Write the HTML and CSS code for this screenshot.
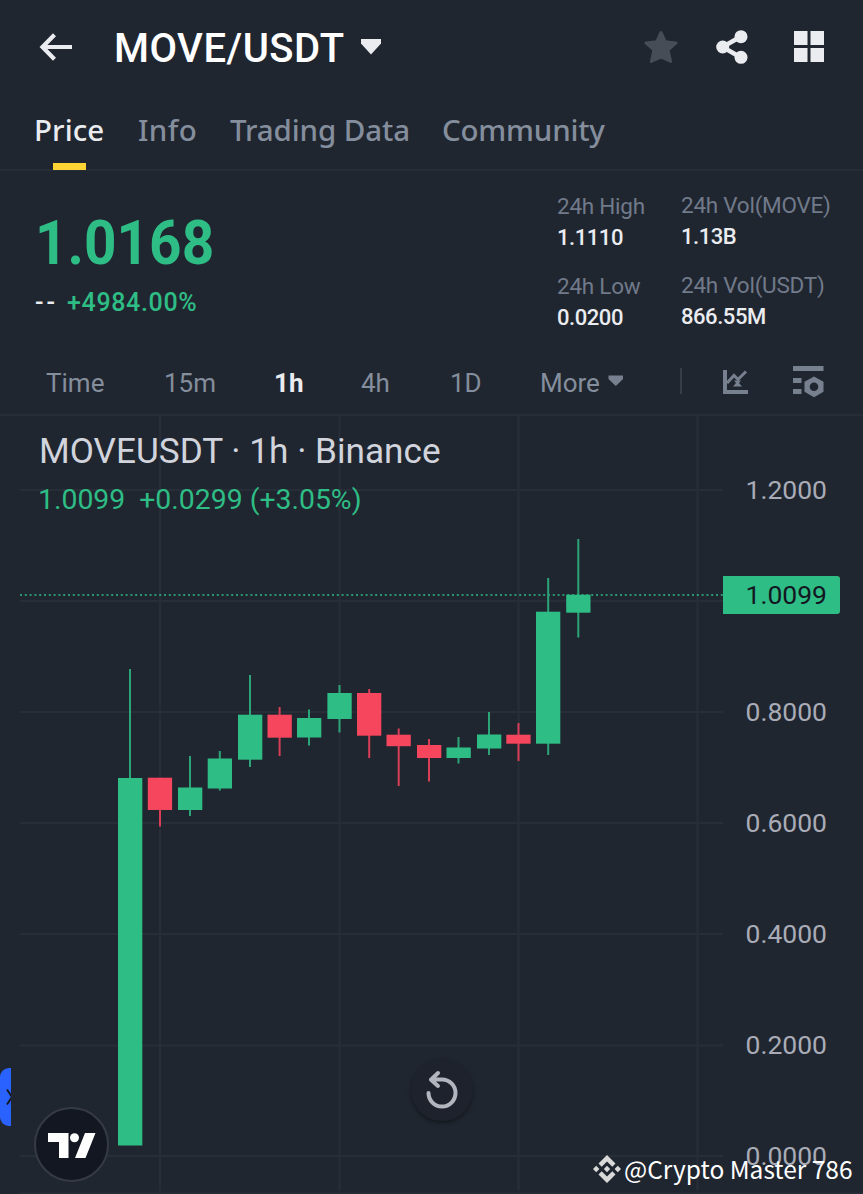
FILE: index.html
```html
<!DOCTYPE html>
<html lang="en">
<head>
  <meta charset="UTF-8" />
  <title>MOVE/USDT</title>
  <meta name="viewport" content="width=device-width, initial-scale=1.0" />
  <link rel="stylesheet" href="styles.css">
</head>
<body>
  <div class="app">
    <header class="topbar">
      <svg class="back" width="34" height="28" viewBox="0 0 34 28" fill="none" stroke="#eaecef" stroke-width="4.2">
        <path d="M33 14H4M15.500 1.800L3.500 14l12 12.200" />
      </svg>
      <h1>MOVE/USDT</h1>
      <svg class="pair-arrow" width="22" height="18" viewBox="0 0 22 18" fill="#eaecef">
        <path d="M1 1h20v4.500L11 16.500 1 5.500z" />
      </svg>
      <div class="actions">
        <svg width="34" height="34" viewBox="0 0 34 34" fill="#474d57" stroke="#474d57" stroke-width="3" stroke-linejoin="round">
          <path d="M17 2.500l4.300 9.300 10.700 1.200-7.900 7 2.500 11.500L17 27l-9.600 4.500L9.900 20 2 13l10.700-1.200z" />
        </svg>
        <svg width="32" height="34" viewBox="0 0 32 34" fill="#eaecef">
          <path d="M6.500 17L25 6.500M6.500 17L25 27.500" stroke="#eaecef" stroke-width="4.500" />
          <circle cx="6.700" cy="17" r="6.500" /><circle cx="25" cy="6.700" r="6.500" /><circle cx="25" cy="27.300" r="6.500" />
        </svg>
        <svg width="30" height="31" viewBox="0 0 30 31" fill="#eaecef">
          <path d="M0 0h13.500v14H0zM16.500 0H30v14H16.500zM0 17h13.500v14H0zM16.500 17H30v14H16.500z" />
        </svg>
      </div>
    </header>

    <nav class="tabs">
      <a class="tab active">Price</a>
      <a class="tab tab-info">Info</a>
      <a class="tab tab-data">Trading Data</a>
      <a class="tab tab-community">Community</a>
    </nav>

    <section class="ticker">
      <div class="last">
        <div class="price">1.0168</div>
        <div class="change"><span class="dash">--</span><span class="pct">+4984.00%</span></div>
      </div>
      <div class="stats">
        <dl class="stats-price">
          <dt>24h High</dt><dd>1.1110</dd>
          <dt>24h Low</dt><dd>0.0200</dd>
        </dl>
        <dl class="stats-vol">
          <dt>24h Vol(MOVE)</dt><dd>1.13B</dd>
          <dt>24h Vol(USDT)</dt><dd>866.55M</dd>
        </dl>
      </div>
    </section>

    <div class="intervals">
      <span class="iv-time">Time</span>
      <span class="iv-15m">15m</span>
      <span class="iv-1h active">1h</span>
      <span class="iv-4h">4h</span>
      <span class="iv-1d">1D</span>
      <span class="iv-more">More
        <svg width="16" height="12" viewBox="0 0 16 12" fill="#76808f"><path d="M.500.500h14.500v3.500L7.800 11 .500 4z" /></svg>
      </span>
      <i class="divider"></i>
      <svg class="ic-line" width="25" height="26" viewBox="0 0 25 26" fill="none" stroke="#76808f" stroke-width="4">
        <path d="M2 1v22h23" />
        <path d="M4 14l7-7.500 4 4L23 2.500" stroke-width="3" />
        <path d="M11 11.500h7l-2 2.500 3 3.500h-9l3-3.500z" fill="#76808f" stroke="none" />
      </svg>
      <svg class="ic-settings" width="31" height="33" viewBox="0 0 31 33" fill="#76808f">
        <path d="M0 1h30.500v5H0zM0 13h8.500v5H0zM0 24h8.500v5H0z" />
        <path fill-rule="evenodd" d="M21 11.500l9.500 5.300v10L21 32.200l-9.500-5.400v-10zM21 17.500a4.300 4.300 0 1 0 0 8.600 4.300 4.300 0 0 0 0-8.600z" />
      </svg>
    </div>

    <main class="chart">
      <!-- 0.2000 is 111px on the price scale -->
      <svg class="plot" width="863" height="778" viewBox="0 416 863 778">
        <g class="grid">
          <path d="M160 416V1191M339.500 416V1191M518.500 416V1191M697.500 416V1191" />
          <path d="M20 490H723M20 601H723M20 712H723M20 823H723M20 934H723M20 1045.500H723M20 1156H723M20 1193.500H863" />
        </g>
        <path class="last-line" d="M20 595H723" />
        <g class="wicks up">
          <path d="M130 669V800M190 756V816M219.800 751V790.500M250 675V767M309 709.500V745.500M339.500 685V732.500M458.500 737V763.500M489 712V755M548.200 578V755M578.300 539V637.500" />
        </g>
        <g class="wicks down">
          <path d="M160 790V826.500M279.600 707V756M369.200 689V758M398.700 728.500V786M429 739V781.500M518.500 723V761" />
        </g>
        <g class="up">
          <rect x="118" y="778" width="24.300" height="367.500" />
          <rect x="178" y="787.500" width="24.300" height="22.500" />
          <rect x="207.700" y="758.500" width="24.300" height="30" />
          <rect x="238" y="714.700" width="24.300" height="45" />
          <rect x="297" y="718" width="24.300" height="19.500" />
          <rect x="327.400" y="693" width="24.300" height="26" />
          <rect x="446.500" y="747.500" width="24.300" height="10.500" />
          <rect x="477" y="734.500" width="24.300" height="14" />
          <rect x="536" y="611.700" width="24.300" height="132" />
          <rect x="566.200" y="594.700" width="24.300" height="18" />
        </g>
        <g class="down">
          <rect x="147.800" y="777.700" width="24.300" height="32.300" />
          <rect x="267.500" y="714.700" width="24.300" height="23" />
          <rect x="357" y="693" width="24.300" height="42.700" />
          <rect x="386.500" y="734.700" width="24.300" height="11.500" />
          <rect x="417" y="745" width="24.300" height="13" />
          <rect x="506.300" y="734.700" width="24.300" height="9" />
        </g>
        <g class="scale">
          <text x="745.500" y="499">1.2000</text>
          <text x="745.500" y="721">0.8000</text>
          <text x="745.500" y="832">0.6000</text>
          <text x="745.500" y="943">0.4000</text>
          <text x="745.500" y="1054">0.2000</text>
          <text x="745.500" y="1165">0.0000</text>
        </g>
        <path class="tag" d="M723 576h114a3 3 0 0 1 3 3v32a3 3 0 0 1-3 3H723z" />
        <text class="tag-text" x="745.500" y="604">1.0099</text>
      </svg>

      <div class="legend">
        <div class="symbol">MOVEUSDT · 1h · Binance</div>
        <div class="values"><span>1.0099</span><span>+0.0299 (+3.05%)</span></div>
      </div>

      <div class="drawer">
        <svg width="11" height="58" viewBox="0 0 11 58" fill="none" stroke="#131722" stroke-width="2"><path d="M7 21.500l5 7.500-5 7.500" /></svg>
      </div>

      <div class="tv-logo">
        <svg width="48" height="25" viewBox="0 0 48 25" fill="#fff">
          <path d="M0 0h20.500v25h-9.500V9H0zM37 0h10.500L37.500 25H27z" />
          <circle cx="26.500" cy="4.800" r="4.500" />
        </svg>
      </div>

      <div class="reset">
        <svg width="34" height="40" viewBox="0 0 34 40" fill="none" stroke="#b2b5be" stroke-width="4" stroke-linecap="round" stroke-linejoin="round">
          <path d="M3.500 23A13.500 13.500 0 1 0 17 9.500H6M13 3L6 9.800l7 6.200" />
        </svg>
      </div>

      <div class="watermark">
        <svg width="28" height="28" viewBox="0 0 28 28" fill="#d9d9d9">
          <path d="M14 0l8.500 8.500-3.200 3.200L14 6.400l-5.300 5.300-3.200-3.200zM14 28l8.500-8.500-3.200-3.200L14 21.600l-5.300-5.300-3.200 3.200zM3.200 10.800L6.400 14l-3.200 3.200L0 14zM24.800 10.800L28 14l-3.200 3.200-3.200-3.200zM14 10.800l3.200 3.200-3.200 3.200-3.200-3.200z" />
        </svg>
        <span>@Crypto Master 786</span>
      </div>
    </main>
  </div>
</body>
</html>
```

FILE: styles.css
```css
* { box-sizing: border-box; margin: 0; padding: 0; }

body {
  background: #202630;
  color: #eaecef;
  font-family: Roboto, "Liberation Sans", sans-serif;
  overflow: hidden;
}

svg {
  display: block;
  flex: none;
}

.app {
  width: 863px;
  height: 1194px;
  display: flex;
  flex-direction: column;
}

.topbar {
  height: 93px;
  padding: 0 39px;
  display: flex;
  align-items: center;
}

h1 {
  margin: 4px 0 0 41px;
  width: 231px;
  font-size: 40px;
  font-weight: 500;
  line-height: 48px;
  letter-spacing: 0.5px;
  color: #fff;
  white-space: nowrap;
}

.pair-arrow {
  margin-left: 15px;
}

.actions {
  margin-left: auto;
  display: flex;
  align-items: center;
}

.actions svg:nth-child(2) { margin-left: 38px; }
.actions svg:nth-child(3) { margin-left: 46px; }

.tabs {
  height: 78px;
  padding-left: 34px;
  display: flex;
  border-bottom: 2px solid #262d37;
}

.tab {
  position: relative;
  padding-top: 18px;
  font-family: "Noto Sans", sans-serif;
  font-size: 29.5px;
  font-weight: 500;
  line-height: 38px;
  letter-spacing: -0.1px;
  color: #848e9c;
  white-space: nowrap;
}

.tab.active {
  width: 70px;
  letter-spacing: 0.1px;
  color: #eaecef;
}

.tab.active::after {
  content: "";
  position: absolute;
  left: 19px;
  bottom: -1px;
  width: 33px;
  height: 7px;
  background: #fcd535;
}

.tab-info { margin-left: 34px; width: 58px; letter-spacing: 0.4px; }
.tab-data { margin-left: 34px; width: 180px; }
.tab-community { margin-left: 32px; letter-spacing: -0.2px; }

.ticker {
  height: 179px;
  padding: 0 33px 0 35px;
  display: flex;
}

.last {
  flex: none;
  width: 522px;
  padding-top: 36px;
}

.price {
  font-size: 61px;
  font-weight: 700;
  line-height: 72px;
  color: #2ebd85;
  transform: scaleX(0.93);
  transform-origin: left;
}

.change {
  display: flex;
  gap: 12px;
  margin-top: 9px;
  font-size: 25px;
  font-weight: 500;
  line-height: 30px;
  white-space: nowrap;
}

.dash { width: 20px; letter-spacing: 3px; }
.pct { color: #2ebd85; letter-spacing: 0.65px; }

.stats {
  display: flex;
  padding-top: 20px;
}

.stats-price {
  width: 124px;
  padding-top: 1px;
}

dt {
  font-size: 22.5px;
  letter-spacing: -0.25px;
  line-height: 28px;
  color: #707a8a;
  white-space: nowrap;
}

dd {
  margin: 3px 0 19px;
  font-size: 22px;
  font-weight: 500;
  line-height: 30px;
  letter-spacing: -0.45px;
}

.intervals {
  height: 66px;
  padding: 2px 0 0 46px;
  display: flex;
  align-items: center;
  font-size: 26px;
  color: #848e9c;
  border-bottom: 2px solid #262d37;
}

.intervals span { white-space: nowrap; }
.intervals .active { color: #eaecef; font-weight: 700; }
.intervals > svg { margin-top: -3px; }

.iv-time { width: 118px; }
.iv-15m { width: 110px; }
.iv-1h { width: 87px; }
.iv-4h { width: 89px; }
.iv-1d { width: 90px; }

.iv-more {
  width: 140px;
  display: flex;
  align-items: center;
  gap: 8px;
}

.iv-more svg { margin-top: -4px; }

.divider {
  width: 2px;
  height: 26px;
  margin-top: -4px;
  background: #363d48;
}

.ic-line { margin-left: 41px; }
.ic-settings { margin-left: 45px; }

.chart {
  position: relative;
  height: 778px;
}

.grid path {
  stroke: #282e38;
  stroke-width: 2;
}

.last-line {
  stroke: #2ebd85;
  stroke-width: 2;
  stroke-dasharray: 2 2.8;
  opacity: 0.75;
}

.up { fill: #2ebd85; }
.down { fill: #f6465d; }

.wicks { stroke-width: 2; }
.wicks.up { stroke: #2ba578; }
.wicks.down { stroke: #d83e55; }

.scale text,
.tag-text {
  font-size: 26.500px;
  fill: #b2b5be;
}

.scale text { fill: #a9acb6; }
.tag { fill: #2ebd85; }
.tag-text { fill: #131722; }

.legend {
  position: absolute;
  left: 39px;
  top: 13px;
}

.symbol {
  font-size: 35.2px;
  line-height: 44px;
  color: #d1d4dc;
  white-space: nowrap;
}

.values {
  display: flex;
  gap: 14px;
  margin: 10px 0 0 -1px;
  font-size: 28.4px;
  line-height: 34px;
  color: #2ebd85;
  white-space: nowrap;
}

.drawer {
  position: absolute;
  left: 0;
  top: 652px;
  width: 11px;
  height: 58px;
  border-radius: 9px 0 0 9px;
  background: #2962ff;
  overflow: hidden;
}

.tv-logo {
  position: absolute;
  left: 34px;
  top: 691px;
  width: 75px;
  height: 75px;
  display: flex;
  align-items: center;
  justify-content: center;
  border: 2px solid #363a45;
  border-radius: 50%;
  background: #131722;
}

.tv-logo svg { margin-top: 2px; }

.reset {
  position: absolute;
  left: 411px;
  top: 643px;
  width: 62px;
  height: 62px;
  display: flex;
  align-items: center;
  justify-content: center;
  border-radius: 50%;
  background: #1e222d;
  box-shadow: 0 2px 4px rgba(0, 0, 0, 0.4);
}

.watermark {
  position: absolute;
  left: 593px;
  top: 735px;
  display: flex;
  align-items: center;
  gap: 3px;
  font-family: "Noto Sans CJK SC", sans-serif;
  font-size: 24.500px;
  line-height: 36px;
  color: #fff;
  white-space: nowrap;
}
```
